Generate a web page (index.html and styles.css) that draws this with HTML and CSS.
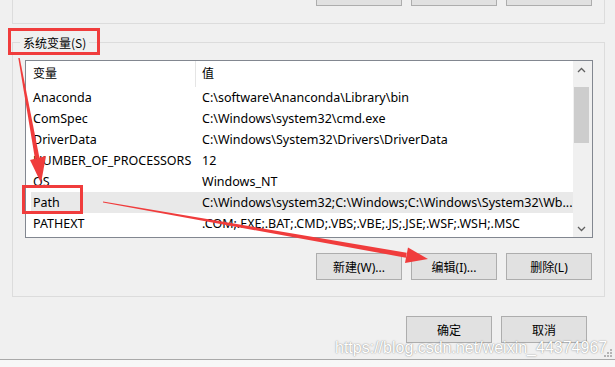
FILE: index.html
```html
<!DOCTYPE html>
<html lang="zh-CN">
<head>
    <meta charset="UTF-8">
    <title>环境变量</title>
    <link rel="stylesheet" href="styles.css">
</head>
<body>
    <div class="window">
        <div class="group group-user">
            <div class="btn-row">
                <button class="btn" aria-label="新建(N)..."></button>
                <button class="btn" aria-label="编辑(E)..."></button>
                <button class="btn" aria-label="删除(D)"></button>
            </div>
        </div>

        <div class="group group-sys">
            <div class="group-title">系统变量(S)</div>
            <div class="listbox">
                <div class="list">
                    <div class="list-head">
                        <span class="head-name">变量</span>
                        <span class="head-value">值</span>
                    </div>
                    <div class="list-rows">
                        <div class="row"><span class="cell-name">Anaconda</span><span class="cell-value">C:\software\Ananconda\Library\bin</span></div>
                        <div class="row"><span class="cell-name">ComSpec</span><span class="cell-value">C:\Windows\system32\cmd.exe</span></div>
                        <div class="row"><span class="cell-name">DriverData</span><span class="cell-value">C:\Windows\System32\Drivers\DriverData</span></div>
                        <div class="row"><span class="cell-name">NUMBER_OF_PROCESSORS</span><span class="cell-value">12</span></div>
                        <div class="row"><span class="cell-name">OS</span><span class="cell-value">Windows_NT</span></div>
                        <div class="row selected"><span class="cell-name">Path</span><span class="cell-value">C:\Windows\system32;C:\Windows;C:\Windows\System32\Wb...</span></div>
                        <div class="row"><span class="cell-name">PATHEXT</span><span class="cell-value">.COM;.EXE;.BAT;.CMD;.VBS;.VBE;.JS;.JSE;.WSF;.WSH;.MSC</span></div>
                    </div>
                </div>
                <div class="scrollbar">
                    <span class="sb-btn">
                        <svg width="9" height="6" viewBox="0 0 9 6"><path d="M1 5 L4.5 1.5 L8 5" fill="none" stroke="#606060" stroke-width="1.3"/></svg>
                    </span>
                    <span class="sb-track"><span class="sb-thumb"></span></span>
                    <span class="sb-btn">
                        <svg width="9" height="6" viewBox="0 0 9 6"><path d="M1 1 L4.5 4.5 L8 1" fill="none" stroke="#606060" stroke-width="1.3"/></svg>
                    </span>
                </div>
            </div>
            <div class="btn-row">
                <button class="btn">新建(W)...</button>
                <button class="btn">编辑(I)...</button>
                <button class="btn">删除(L)</button>
            </div>
        </div>

        <div class="btn-row dialog-btns">
            <button class="btn">确定</button>
            <button class="btn">取消</button>
        </div>

        <!-- annotations drawn over the dialog -->
        <div class="mark mark-title"></div>
        <div class="mark mark-path"></div>
        <svg class="arrows" width="615" height="367" viewBox="0 0 615 367">
            <polygon points="18.3,58 19.7,58 39.5,158 35,159" fill="#f03c3c"/>
            <polygon points="30,160 46,156 41,183" fill="#f03c3c"/>
            <polygon points="103,201.4 103,202.6 405.9,257.7 406.7,252.7" fill="#f03c3c"/>
            <polygon points="408,247.5 405,263 428,259" fill="#f03c3c"/>
        </svg>
        <div class="watermark">https://blog.csdn.net/weixin_44374967</div>
        <svg class="grip" width="10" height="10" viewBox="0 0 10 10">
            <rect x="7" y="1" width="2" height="2" fill="#b4b4b4"/>
            <rect x="4" y="4" width="2" height="2" fill="#b4b4b4"/>
            <rect x="7" y="4" width="2" height="2" fill="#b4b4b4"/>
            <rect x="1" y="7" width="2" height="2" fill="#b4b4b4"/>
            <rect x="4" y="7" width="2" height="2" fill="#b4b4b4"/>
            <rect x="7" y="7" width="2" height="2" fill="#b4b4b4"/>
        </svg>
    </div>
</body>
</html>
```

FILE: styles.css
```css
html, body {
    margin: 0;
    padding: 0;
    height: 100%;
    overflow: hidden;
}

body {
    background: linear-gradient(#d6d6d6, #f4f4f4 4px, #f7f7f7);
    font-family: "Noto Sans", "Noto Sans CJK SC", sans-serif;
    font-size: 12px;
    color: #000;
}

.window {
    position: relative;
    display: flex;
    flex-direction: column;
    box-sizing: border-box;
    width: 615px;
    height: 360px;
    background: #f0f0f0;
    border-bottom: 1px solid #a9a9a9;
}

.group {
    box-sizing: border-box;
    width: 593px;
    margin-left: 12px;
    border: 1px solid #dcdcdc;
}

.group-user {
    margin-top: -30px;
    padding: 8px 12px 17px;
}

.group-sys {
    display: flex;
    flex-direction: column;
    margin-top: 18px;
    height: 255px;
    padding: 0 11px 0 12px;
}

.group-title {
    align-self: flex-start;
    margin: -8px 0 0 -5px;
    padding: 0 3px;
    height: 16px;
    line-height: 16px;
    background: #f0f0f0;
    font-family: "Noto Sans CJK SC", sans-serif;
}

.btn-row {
    display: flex;
    justify-content: flex-end;
    gap: 9px;
}

.group-sys .btn-row {
    margin: 15px 1px 0 0;
}

.dialog-btns {
    margin-top: 19px;
    padding-right: 28px;
}

.btn {
    box-sizing: border-box;
    width: 86px;
    height: 27px;
    padding: 0;
    background: #e1e1e1;
    border: 1px solid #adadad;
    border-radius: 0;
    font-family: "Noto Sans", "Noto Sans CJK SC", sans-serif;
    font-size: 12px;
    color: #000;
}

/* list view */
.listbox {
    display: flex;
    box-sizing: border-box;
    height: 178px;
    margin-top: 9px;
    border: 1px solid #828790;
    background: #fff;
}

.list {
    flex: 1;
    overflow: hidden;
}

.list-head {
    display: flex;
    height: 26px;
    line-height: 24px;
    font-family: "Noto Sans CJK SC", sans-serif;
}

.head-name {
    box-sizing: border-box;
    width: 170px;
    padding-left: 7px;
    border-right: 1px solid #e5e5e5;
}

.head-value {
    padding-left: 6px;
}

.list-rows {
    margin-left: 5px;
    font-size: 12.5px;
}

.row {
    display: flex;
    height: 21px;
    line-height: 21px;
    white-space: nowrap;
}

.row.selected {
    background: #e9e9e9;
}

.cell-name {
    box-sizing: border-box;
    flex: none;
    width: 164px;
    padding-left: 2px;
}

.cell-value {
    padding-left: 7px;
}

.scrollbar {
    display: flex;
    flex-direction: column;
    flex: none;
    width: 19px;
    background: #f0f0f0;
}

.sb-btn {
    display: flex;
    align-items: center;
    justify-content: center;
    height: 17px;
    padding-right: 2px;
}

.sb-track {
    flex: 1;
}

.sb-thumb {
    display: block;
    height: 56px;
    margin: 9px 3px 0 1px;
    background: #cdcdcd;
}

/* annotations */
.mark {
    position: absolute;
    box-sizing: border-box;
    border: 3px solid #f03c3c;
}

.mark-title {
    left: 8px;
    top: 28px;
    width: 92px;
    height: 27px;
}

.mark-path {
    left: 22px;
    top: 185px;
    width: 61px;
    height: 29px;
}

.arrows {
    position: absolute;
    left: 0;
    top: 0;
    pointer-events: none;
}

.watermark {
    position: absolute;
    left: 335px;
    top: 338px;
    font-family: "Liberation Sans", Arial, sans-serif;
    font-size: 16px;
    line-height: 20px;
    color: #fff;
    text-shadow: 0 0 1.5px rgba(0, 0, 0, 0.55);
    white-space: nowrap;
}

.grip {
    position: absolute;
    left: 603px;
    top: 348px;
}
```
